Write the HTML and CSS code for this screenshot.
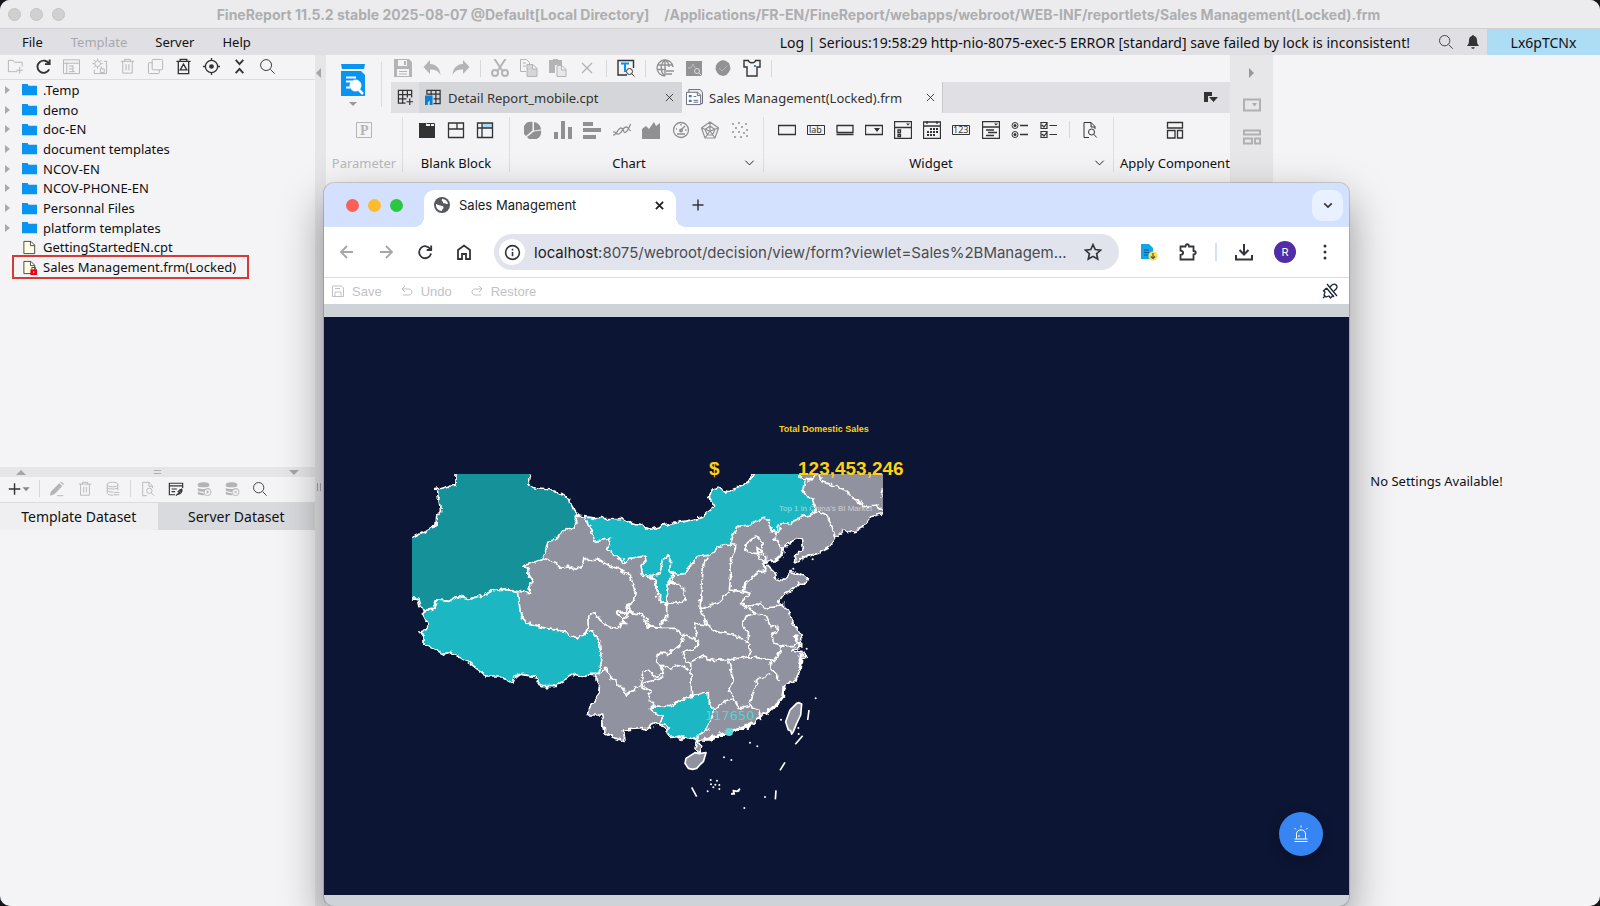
FILE: index.html
```html
<!DOCTYPE html>
<html lang="en">
<head>
  <meta charset="UTF-8">
  <meta name="viewport" content="width=device-width, initial-scale=1">
  <title>FineReport Designer</title>
  <link rel="stylesheet" href="styles.css">
</head>
<body>
  <!-- Shared icons -->
  <svg class="sprite" width="0" height="0" aria-hidden="true">
    <symbol id="i-search" viewBox="0 0 18 18"><circle cx="7.500" cy="7.500" r="5.800"/><path d="M12 12l4.500 4.500"/></symbol>
    <symbol id="i-trash" viewBox="0 0 18 18"><path d="M2 3.500h14M6 3.500v-2h6v2M4 3.500v12.500h10V3.500M7.500 6.500v6.500M10.500 6.500v6.500"/></symbol>
    <symbol id="i-folder" viewBox="0 0 16 14"><path class="solid" d="M0 1h6l1 2h9v10H0z"/><path d="M7 1.500h8.500" stroke-width="1.500"/></symbol>
    <symbol id="i-file" viewBox="0 0 16 16"><path fill="#fffde4" stroke="#444" d="M2 1.500h7.500l4 4v9H2z"/><path stroke="#444" d="M9 1.500v4.500h4.500"/></symbol>
    <symbol id="i-close" viewBox="0 0 10 10"><path d="M1 1l8 8M9 1l-8 8"/></symbol>
    <symbol id="i-chev" viewBox="0 0 12 8"><path d="M1.500 1.500L6 6l4.500-4.500"/></symbol>
    <symbol id="i-pageview" viewBox="0 0 18 18"><path d="M8 16.500H3v-15h7l4 4V8M10 1.500V6h4"/><circle cx="10.500" cy="11" r="3"/><path d="M12.700 13.200l3 3.300"/></symbol>
    <symbol id="i-db" viewBox="0 0 18 18"><path class="solid" d="M2 4c0-3.500 13-3.500 13 0v1.500c0 2-13 2-13 0zM2 8c2 1.500 11 1.500 13 0v1c-4 0-6 2-6 3-3 0-7-.5-7-2zM2 12c2 1 4 1.500 6.500 1.500 0 1 .5 2 1 2.500-4 0-7.500-.5-7.500-2z"/></symbol>
  </svg>

  <div class="app">
    <header class="titlebar">
      <div class="lights"><i></i><i></i><i></i></div>
      <div class="app-title"><span>FineReport 11.5.2 stable 2025-08-07 @Default[Local Directory]</span><span>/Applications/FR-EN/FineReport/webapps/webroot/WEB-INF/reportlets/Sales Management(Locked).frm</span></div>
    </header>

    <nav class="menubar">
      <button type="button">File</button>
      <button type="button" disabled>Template</button>
      <button type="button">Server</button>
      <button type="button">Help</button>
      <span class="log">Log | Serious:19:58:29 http-nio-8075-exec-5 ERROR [standard] save failed by lock is inconsistent!</span>
      <button type="button" class="icon" aria-label="Search"><svg><use href="#i-search"/></svg></button>
      <button type="button" class="icon bell" aria-label="Messages"><svg viewBox="0 0 18 18"><path class="solid" d="M9 1c.8 0 1 .6 1 1.200 2.500.6 3.500 2.500 3.500 5 0 3 .8 4.500 2 5.800v.5h-13V13c1.200-1.300 2-2.800 2-5.800 0-2.500 1-4.400 3.500-5C8 1.600 8.200 1 9 1zM7 15h4c-.3 1.300-1 1.700-2 1.700S7.300 16.300 7 15z"/></svg></button>
      <a href="#" class="account">Lx6pTCNx</a>
    </nav>

    <div class="workspace">
      <!-- Template tree and datasets -->
      <aside class="side">
        <div class="side-tools">
          <button type="button" class="icon" aria-label="New folder" disabled><svg viewBox="0 0 18 18"><path d="M11 14.500H1.500v-12h5l1.500 2h8V9M13.500 9.500v7M10 13h7"/></svg></button>
          <button type="button" class="icon" aria-label="Refresh"><svg viewBox="0 0 18 18" class="bold"><path d="M15 6.500A6.500 6.500 0 1 0 15 12M15.500 1.500v5H10.500"/></svg></button>
          <button type="button" class="icon" aria-label="Show in folder" disabled><svg viewBox="0 0 18 18"><path d="M.5 2h17v14.500H.5zM.5 5.500h17M4 5.500v11M6.500 8.500h4M6.500 11.500h4M6.500 14.500h6M10.500 8v6.500"/></svg></button>
          <button type="button" class="icon" aria-label="Settings" disabled><svg viewBox="0 0 18 18"><circle cx="7" cy="6" r="3"/><path d="M7 .5v2M7 9.500v2M1.500 6h2M10.500 6h2M3 2l1.500 1.500M11 2L9.500 3.500M3 10l1.500-1.500M13.500 3.500h3v13h-13v-4M10 11.500h4v4h-4zM11 9v2"/></svg></button>
          <button type="button" class="icon" aria-label="Delete" disabled><svg><use href="#i-trash"/></svg></button>
          <button type="button" class="icon" aria-label="Copy" disabled><svg viewBox="0 0 18 18"><rect x="5.500" y="1.500" width="11" height="11" rx="1"/><path d="M5.500 5h-3c-.6 0-1 .4-1 1v9.500c0 .6.400 1 1 1H12c.6 0 1-.4 1-1v-3"/></svg></button>
          <button type="button" class="icon" aria-label="Recycle bin"><svg viewBox="0 0 18 18"><path d="M1.500 3.500h15M5.500 3.500v-2h7v2M3.500 3.500v13h11v-13M9 6.500l3.500 6h-7z" stroke-width="1.400"/></svg></button>
          <button type="button" class="icon" aria-label="Locate"><svg viewBox="0 0 18 18"><circle cx="9" cy="9" r="6.500" stroke-width="1.400"/><circle class="solid" cx="9" cy="9" r="2.500"/><path d="M9 0v3M9 15v3M0 9h3M15 9h3" stroke-width="1.400"/></svg></button>
          <button type="button" class="icon" aria-label="Collapse all"><svg viewBox="0 0 18 18" class="bold"><path d="M5 2l4 4.500L13 2M5 16l4-4.500 4 4.500"/></svg></button>
          <button type="button" class="icon" aria-label="Search templates"><svg><use href="#i-search"/></svg></button>
        </div>
        <ul class="tree">
          <li class="dir"><svg><use href="#i-folder"/></svg>.Temp</li>
          <li class="dir"><svg><use href="#i-folder"/></svg>demo</li>
          <li class="dir"><svg><use href="#i-folder"/></svg>doc-EN</li>
          <li class="dir"><svg><use href="#i-folder"/></svg>document templates</li>
          <li class="dir"><svg><use href="#i-folder"/></svg>NCOV-EN</li>
          <li class="dir"><svg><use href="#i-folder"/></svg>NCOV-PHONE-EN</li>
          <li class="dir"><svg><use href="#i-folder"/></svg>Personnal Files</li>
          <li class="dir"><svg><use href="#i-folder"/></svg>platform templates</li>
          <li><svg><use href="#i-file"/></svg>GettingStartedEN.cpt</li>
          <li class="locked"><svg viewBox="0 0 16 16"><use href="#i-file"/><path fill="#e60012" stroke="none" d="M9 10h7v6H9z"/><path stroke="#e60012" d="M10.500 10V8h4v2"/><path stroke="#fff" d="M12.500 12v2"/></svg>Sales Management.frm(Locked)</li>
        </ul>
        <div class="hsplit"><i class="up"></i><b></b><i class="down"></i></div>
        <div class="data-tools">
          <button type="button" class="icon add" aria-label="Add dataset"><svg viewBox="0 0 24 18"><path d="M7 2.500v13M.5 9h13" stroke-width="1.600"/><path d="M16 7h8l-4 4.500z" fill="#888" stroke="none"/></svg></button>
          <span class="sep"></span>
          <button type="button" class="icon" aria-label="Edit" disabled><svg viewBox="0 0 18 18"><path class="solid" d="M2 12L11.500 2.500l3.500 3L6 15l-5 1.500zM12.500 1.500l1-1 3.500 3-1 1z"/><path d="M9 16.500h7"/></svg></button>
          <button type="button" class="icon" aria-label="Remove" disabled><svg><use href="#i-trash"/></svg></button>
          <button type="button" class="icon" aria-label="Dataset" disabled><svg viewBox="0 0 18 18"><ellipse cx="8.500" cy="4" rx="6" ry="2.500"/><path d="M2.500 4v9.500c0 1.500 3 2.500 7 2.500M14.500 4v6.500M2.500 7.500c1 2 11 2 12 0M2.500 10.500c1 2 6 2 7 2M10 13h6M10 15.500h6"/></svg></button>
          <span class="sep"></span>
          <button type="button" class="icon" aria-label="Preview dataset" disabled><svg><use href="#i-pageview"/></svg></button>
          <button type="button" class="icon" aria-label="Connection"><svg viewBox="0 0 18 18"><path d="M8 15.500H1.500v-13h15V8M1.500 5.500h15M4 9h6M4 12h4M9 16.500l2-2M11 12.500c2-3 4-3 4-3l1-1M15.500 9.500c1 2-1 5-4.500 5.500z" stroke-width="1.300"/></svg></button>
          <button type="button" class="icon" aria-label="Run" disabled><svg viewBox="0 0 18 18"><use href="#i-db"/><circle cx="13" cy="12.500" r="4"/><path class="solid" d="M12 10.500l3 2-3 2z"/></svg></button>
          <button type="button" class="icon" aria-label="Stop" disabled><svg viewBox="0 0 18 18"><use href="#i-db"/><circle cx="13" cy="12.500" r="4"/><path d="M11.500 11l3 3M14.500 11l-3 3"/></svg></button>
          <button type="button" class="icon" aria-label="Search datasets"><svg><use href="#i-search"/></svg></button>
        </div>
        <div class="data-tabs">
          <button type="button" class="on">Template Dataset</button>
          <button type="button">Server Dataset</button>
        </div>
      </aside>
      <div class="vsplit"><i></i><b></b></div>

      <main class="designer">
        <div class="top">
          <button type="button" class="preview" aria-label="Preview"><svg viewBox="0 0 24 42"><path fill="#0a94f2" stroke="none" d="M0 0h24l-1 5H1zM0 7h20l4 4v21H0z"/><path stroke="#fff" stroke-width="2" d="M5 13.500h10M5 17.500h6M5 23.500h4"/><circle cx="14.500" cy="21.500" r="5.500" fill="#fff" stroke="#fff"/><path stroke="#fff" stroke-width="2.500" d="M18 26l4 4"/><path fill="#999" stroke="none" d="M8 38h8l-4 4z"/></svg></button>
          <div class="top-main">
            <div class="quick">
              <button type="button" class="icon" aria-label="Save" disabled><svg viewBox="0 0 18 18"><path class="solid" fill-rule="evenodd" d="M0 0h15l3 3v15H0zM4 1v6h9V1zM3 10v7h12v-7zM10 2h2v4h-2z"/><path d="M5 12.500h8M5 15h8"/></svg></button>
              <button type="button" class="icon" aria-label="Undo" disabled><svg viewBox="0 0 18 18"><path class="solid" d="M7 1v4c6 0 10 4 10.500 11-2.500-4.500-5.500-5.500-10.500-5.500V15L.5 8z"/></svg></button>
              <button type="button" class="icon" aria-label="Redo" disabled><svg viewBox="0 0 18 18"><path class="solid" d="M11 1v4C5 5 1 9 .5 16 3 11.500 6 10.500 11 10.500V15l6.500-7z"/></svg></button>
              <span class="sep"></span>
              <button type="button" class="icon" aria-label="Cut" disabled><svg viewBox="0 0 18 18" class="bold"><path d="M3.500 0l8 12M14.500 0l-8 12"/><circle cx="4" cy="14" r="3"/><circle cx="14" cy="14" r="3"/></svg></button>
              <button type="button" class="icon" aria-label="Copy" disabled><svg viewBox="0 0 18 18"><path d="M6 12.500H.5v-12h6l3 3V5M3 4h3M3 7h3"/><path fill="#d5d5d5" d="M7 5.500h6l4 4v8H7zM12.500 5.500V10H17"/></svg></button>
              <button type="button" class="icon" aria-label="Paste" disabled><svg viewBox="0 0 18 18"><path class="solid" d="M0 1h4V0h5v1h4v5H6v8H0z"/><path fill="#e8e8e8" d="M8 6.500h5l4 4v7H8zM12.500 6.500V11H17"/></svg></button>
              <button type="button" class="icon" aria-label="Delete" disabled><svg viewBox="0 0 18 18"><path d="M4 4l10 10M14 4L4 14" stroke-width="1.400"/></svg></button>
              <span class="sep"></span>
              <button type="button" class="icon" aria-label="Find text"><svg viewBox="0 0 18 18"><path d="M10 16H1V1.500h15.500V9" stroke-width="1.400"/><path stroke="#0a94f2" stroke-width="2" d="M4 4.500h8M8 4.500V13"/><circle cx="12.500" cy="12.500" r="3"/><path d="M14.500 14.500l3 3"/></svg></button>
              <span class="sep"></span>
              <button type="button" class="icon dim" aria-label="Web preview"><svg viewBox="0 0 18 18"><path d="M17 8a8 8 0 1 0-8 9M9 1v16M1.500 6h15M1 10.500h9M9 1C4 5 4 13 9 17M9 1c3 2 4 4 4 7M10 12h8M10 15h6" stroke-width="1.400"/></svg></button>
              <button type="button" class="icon dim" aria-label="Form check"><svg viewBox="0 0 18 18"><path class="solid" d="M1 2h16v15H1z"/><path stroke="#bbb" d="M3 9h3l2-4 2 4"/><circle stroke="#ddd" cx="12" cy="12" r="2.500"/><path stroke="#ddd" d="M14 14l3 3"/></svg></button>
              <button type="button" class="icon dim" aria-label="Approve"><svg viewBox="0 0 18 18"><path class="solid" d="M9 1l3 1 3 2 1 3 .5 3-1.500 3-2.500 3L9 17l-3.500-1L3 13.500 1.500 10 2 6.500 3.500 4 6 2z"/><path stroke="#b5b5b5" d="M5 9l3 3 5-5"/></svg></button>
              <button type="button" class="icon" aria-label="Theme"><svg viewBox="0 0 18 18"><path d="M1 1.500h4.500C6 4.500 12 4.500 12.500 1.500H17V8h-3v9H4V8H1z" stroke-width="1.400"/><path stroke="#0a94f2" d="M11 7h2" stroke-width="2"/></svg></button>
              <span class="sep"></span>
            </div>
            <div class="doc-tabs">
              <button type="button" class="newtab" aria-label="New report"><svg viewBox="0 0 18 18"><path d="M9 15H1.500V1.500h14V9M1.500 6h14M1.500 10.500H10M6 1.500V15M11 1.500V9M13.500 10v7M10 13.500h7" stroke-width="1.300"/></svg></button>
              <div class="doc-tab">
                <svg viewBox="0 0 18 18"><path d="M9 15.500h7V1.500H2V6M2 5.500h14M9 10.500h7M6.500 1.500v5M11.500 1.500v14" stroke-width="1.300"/><path fill="#0a7fd0" stroke="none" d="M0 7h8v10H5v-5l-2 2v3H0z"/></svg>
                <span>Detail Report_mobile.cpt</span>
                <button type="button" aria-label="Close"><svg><use href="#i-close"/></svg></button>
              </div>
              <div class="doc-tab on">
                <svg viewBox="0 0 18 18"><path fill="#e8edf0" stroke="#667" d="M3 .5h12l2.500 3v12H3z"/><path fill="#fff" stroke="#667" d="M.5 3.500h12l3 3v10H.5zM12 3.500V7h3"/><path stroke="#3a7fc0" stroke-width="2.500" d="M3 7.500h3M3 12.500h3"/><path stroke="#667" d="M8 8h3M8 12h5M8 14h5"/></svg>
                <span>Sales Management(Locked).frm</span>
                <button type="button" aria-label="Close"><svg><use href="#i-close"/></svg></button>
              </div>
              <button type="button" class="tablist" aria-label="All tabs"><svg viewBox="0 0 14 12"><path class="solid" d="M0 0h8v4H4v6H0zM5 5h9l-4.500 5z"/></svg></button>
            </div>
          </div>
        </div>

        <!-- Component ribbon -->
        <div class="ribbon">
          <section class="param">
            <div class="tools"><svg viewBox="0 0 18 18"><path d="M1.500 1.500h15v15h-15z"/><text x="5" y="14">P</text></svg></div>
            <h2>Parameter</h2>
          </section>
          <section class="block">
            <div class="tools">
              <svg viewBox="0 0 18 18"><path class="solid" d="M1 2h7v3h9v12H1z"/><path d="M8.500 2.500h8v3M12.500 2.500v3"/></svg>
              <svg viewBox="0 0 18 18"><path d="M1.500 2h15v14.500h-15zM1.500 8h15M10 2v6" stroke-width="1.300"/></svg>
              <svg viewBox="0 0 18 18"><path fill="#a5dcf5" stroke="none" d="M6 2h10v5H6z"/><path d="M1.500 2h15v14.500h-15zM1.500 7h15M6 2v14.500M6 12" stroke-width="1.300"/></svg>
            </div>
            <h2>Blank Block</h2>
          </section>
          <section class="chart">
            <div class="tools">
              <svg viewBox="0 0 18 18"><path class="solid" d="M8.500 1v8.500L2 15A8 8 0 0 1 8.500 1zM10 1a8 8 0 0 1 7 7.500l-7 1zM10 10.500l7-1A8 8 0 0 1 3 16z"/></svg>
              <svg viewBox="0 0 18 18"><path class="solid" d="M0 11h4v7H0zM7 0h4v18H7zM14 6h4v12h-4z"/></svg>
              <svg viewBox="0 0 18 18"><path class="solid" d="M0 1h10v4H0zM0 7h18v4H0zM0 14h13v4H0z"/></svg>
              <svg viewBox="0 0 18 18"><path d="M0 14c3 1 5-7 8-7s2 6 5 4 3-6 5-8M0 11c3-1 3 3 6 2s4-7 7-7 2 3 5 4" stroke-width="1.300"/></svg>
              <svg viewBox="0 0 18 18"><path class="solid" d="M0 18V8l4-3 3 3 5-7 2 4 4-3v16z"/></svg>
              <svg viewBox="0 0 18 18"><circle cx="9" cy="9" r="7.500" stroke-width="1.300"/><path d="M9 9l4-4M5 13h8M4 8h1M9 3v1.500M13 9h1.500" stroke-width="1.500"/><circle class="solid" cx="9" cy="9.500" r="2"/></svg>
              <svg viewBox="0 0 18 18"><path d="M9 1l8.500 6-3.500 10H4L.5 7zM9 5l5 3.500-2.500 5.500h-5L4 8.500zM9 1v9M.5 7L9 10l8.500-3M4 17l5-7 5 7" stroke-width="1.200"/></svg>
              <svg viewBox="0 0 18 18" class="dots"><path d="M2 3h0M8 2h0M15 3h0M5 7h0M11 6h0M16 9h0M2 11h0M8 11h0M13 12h0M4 16h0M10 16h0M16 15h0"/></svg>
            </div>
            <h2>Chart</h2><svg class="more"><use href="#i-chev"/></svg>
          </section>
          <section class="widget">
            <div class="tools">
              <svg viewBox="0 0 18 18"><path d="M.5 4.500h17v9H.5z" stroke-width="1.300"/></svg>
              <svg viewBox="0 0 18 18"><path d="M.5 4.500h17v9H.5z"/><text x="2" y="12">lab</text></svg>
              <svg viewBox="0 0 18 18"><path d="M1 4.500h16v7H1zM.5 13.500h17" stroke-width="1.300"/></svg>
              <svg viewBox="0 0 18 18"><path d="M.5 4.500h17v9H.5z" stroke-width="1.300"/><path class="solid" d="M9 7h6l-3 4z"/></svg>
              <svg viewBox="0 0 18 18"><path d="M.5.500h17v17H.5zM.5 6.500h17M4 9h2.500v2.500H4zM4 13.500h2.500v2H4z" stroke-width="1.300"/><path class="solid" d="M12 2.500h4l-2 2z"/></svg>
              <svg viewBox="0 0 18 18"><path d="M.5 1h17v16.500H.5zM.5 5h17M4 0v3M14 0v3" stroke-width="1.300"/><path stroke-width="2" stroke-dasharray="2 1" d="M7 8h8M4 11h11M4 14h8"/></svg>
              <svg viewBox="0 0 18 18"><path d="M.5 4.500h17v9H.5z"/><text x="1" y="12">123</text></svg>
              <svg viewBox="0 0 18 18"><path d="M.5.500h17v17H.5zM.5 6h17M4 9h8M6 11.500h9M4 14.500h8" stroke-width="1.300"/><path class="solid" d="M12 2.500h4l-2 2z"/></svg>
              <svg viewBox="0 0 18 18"><circle cx="4" cy="4.500" r="3"/><circle cx="4" cy="13.500" r="3"/><circle class="solid" cx="4" cy="4.500" r="1.500"/><circle class="solid" cx="4" cy="13.500" r="1.500"/><path d="M9 4.500h8M9 13.500h8" stroke-width="1.300"/></svg>
              <svg viewBox="0 0 18 18"><path d="M1 1.500h6v6H1zM1 10.500h6v6H1zM2 4l2 2 3-4M2 13l2 2 3-4M9.500 4.500h7.500M9.500 13.500h7.500" stroke-width="1.200"/></svg>
              <span class="sep"></span>
              <svg><use href="#i-pageview"/></svg>
            </div>
            <h2>Widget</h2><svg class="more"><use href="#i-chev"/></svg>
          </section>
          <section class="apply">
            <div class="tools"><svg viewBox="0 0 18 18"><path d="M1.500 1.500h15v5.500h-15zM1.500 9.500h7.500v7.500H1.500zM11.500 9.500h5v7.500h-5z" stroke-width="1.300"/></svg></div>
            <h2>Apply Component</h2>
          </section>
        </div>
      </main>

      <aside class="rail">
        <svg viewBox="0 0 18 18"><path fill="#999" stroke="none" d="M6 4l5 5-5 5z"/></svg>
        <svg viewBox="0 0 18 18"><path d="M1 3.500h16v11H1z" stroke-width="2"/><path fill="#aaa" stroke="none" d="M9 7h5l-2.500 3.500z"/></svg>
        <svg viewBox="0 0 18 18"><path d="M1 2.500h16v4H1zM1 10.500h8v5H1zM12 10.500h5v5h-5z" stroke-width="2"/></svg>
      </aside>
      <aside class="settings">No Settings Available!</aside>
    </div>

    <!-- Browser window floating over the designer -->
    <div class="browser">
      <div class="tabstrip">
        <div class="lights on"><i></i><i></i><i></i></div>
        <div class="page-tab">
          <svg viewBox="0 0 16 16"><circle cx="8" cy="8" r="8" fill="#55585d" stroke="none"/><path fill="#fff" stroke="none" d="M8 2c3-.5 5.500 2 6 4.500-1 1-2 .5-2.500 0S9 7 9 5.500 7 4 8 2zM2 7l4 1.500c2 .5 3.500 0 3.500 2S8 11.500 8 14C4.500 14 1.500 11 2 7z"/></svg>
          <span>Sales Management</span>
          <button type="button" aria-label="Close tab"><svg><use href="#i-close"/></svg></button>
        </div>
        <button type="button" class="plus" aria-label="New tab"><svg viewBox="0 0 12 12"><path d="M6 .5v11M.5 6h11"/></svg></button>
        <button type="button" class="tabsearch" aria-label="Search tabs"><svg><use href="#i-chev"/></svg></button>
      </div>
      <div class="addressbar">
        <button type="button" class="off" aria-label="Back"><svg viewBox="0 0 18 18"><path d="M15 9H3M9 3L3 9l6 6"/></svg></button>
        <button type="button" class="off" aria-label="Forward"><svg viewBox="0 0 18 18"><path d="M3 9h12M9 3l6 6-6 6"/></svg></button>
        <button type="button" aria-label="Reload"><svg viewBox="0 0 18 18"><path d="M14.500 6.500A6 6 0 1 0 15 10.500M15.200 2.500v4.500H10.700"/></svg></button>
        <button type="button" aria-label="Home"><svg viewBox="0 0 18 18"><path d="M3 16V7l6-4.500L15 7v9h-4v-5H7v5z"/></svg></button>
        <div class="omnibox">
          <span class="info"><svg viewBox="0 0 16 16"><circle cx="8" cy="8" r="6.500"/><path d="M8 7.500v4M8 4.500v1.500"/></svg></span>
          <div class="url"><b>localhost</b>:8075/webroot/decision/view/form?viewlet=Sales%2BManagem...</div>
          <svg viewBox="0 0 16 16"><path d="M8 1.500l2 4.300 4.700.5-3.500 3.200 1 4.800L8 11.900l-4.200 2.400 1-4.800L1.300 6.300 6 5.800z"/></svg>
        </div>
        <button type="button" aria-label="File downloader"><svg viewBox="0 0 16 18"><path fill="#12a5e8" stroke="none" d="M0 1h8l4 4v11H0z"/><path stroke="#075a94" stroke-width="1" d="M3 7h5M3 9.500h5M3 12h4"/><circle cx="12" cy="13" r="4.500" fill="#f7e04a" stroke="none"/><path stroke="#555" stroke-width="1.200" d="M12 10v5.500M9.800 13.500l2.200 2 2.200-2"/></svg></button>
        <button type="button" aria-label="Extensions"><svg viewBox="0 0 18 18" class="bold"><path d="M1.500 3.500h5c.3-3 3.200-3 3.500 0h4.500v4.500c3 .3 3 3.200 0 3.500v5h-13V12c3.500-.3 3.500-4 0-4.300z"/></svg></button>
        <span class="bar"></span>
        <button type="button" aria-label="Downloads"><svg viewBox="0 0 18 18"><path d="M9 1v10M4.500 7L9 11.500 13.500 7M1 12v4.500h16V12" stroke-width="2"/></svg></button>
        <button type="button" class="avatar">R</button>
        <button type="button" aria-label="Menu"><svg viewBox="0 0 18 18" class="kebab"><path d="M9 3h0M9 9h0M9 15h0"/></svg></button>
      </div>
      <div class="editbar">
        <button type="button"><svg viewBox="0 0 12 12"><path d="M.5 1h9l2 2v8.500H.5zM3 11V7h6v4M3 3.500h5"/></svg>Save</button>
        <button type="button"><svg viewBox="0 0 12 12"><path d="M4 1L1 4l3 3M1 4h7c4 0 4 6 0 6H2"/></svg>Undo</button>
        <button type="button"><svg viewBox="0 0 12 12"><path d="M8 1l3 3-3 3M11 4H4c-4 0-4 6 0 6h6"/></svg>Restore</button>
        <button type="button" class="unplug" aria-label="Disconnect"><svg viewBox="0 0 16 16"><path d="M5 1l10 12M8 4l2.500-2.500c3-1.500 5.500 1.500 4 4L12 8M4.500 5L1.500 8l1.500 1-1 3 2 2 3-1 1.500 2 3-3M4.500 5l7.500 9M1 15l2.500-2.500"/></svg></button>
      </div>
      <div class="dashboard">
        <div class="map">
          <svg viewBox="36 0 1449 1080">
            <defs>
              <clipPath id="frame"><path d="M36 42H1449V1080H36z"/></clipPath>
              <filter id="coast" x="0" y="0" width="100%" height="100%" color-interpolation-filters="sRGB">
                <feTurbulence type="fractalNoise" baseFrequency="0.06" numOctaves="2" seed="4"/>
                <feDisplacementMap in="SourceGraphic" scale="18" xChannelSelector="R" yChannelSelector="G"/>
              </filter>
            </defs>
            <g clip-path="url(#frame)"><g filter="url(#coast)">
              <path class="land" d="M533 168L555 172L600 200L700 240L900 220L1060 90L1120 20H1460V160L1430 165L1415 170L1390 200L1370 205L1368 218L1330 210L1305 235L1285 265L1255 280L1215 290L1195 305L1183 305L1188 285L1210 265L1208 240L1190 236L1165 250L1150 265L1145 290L1125 303L1105 303L1092 310L1110 328L1125 335L1130 355L1145 362L1165 345L1170 335L1185 338L1225 355L1222 370L1195 370L1170 395L1150 405L1135 425L1165 450L1180 490L1205 530L1205 560L1178 570L1205 575L1220 585L1205 600L1200 630L1185 665L1160 670L1150 700L1130 735L1090 765L1050 800L1000 810L970 825L930 840L900 840L888 838L905 862L900 878L885 865L890 840L870 828L845 838L800 815L775 785L740 805L670 810L675 845L660 840L615 820L610 790L605 765L565 765L570 740L595 710L598 680L585 660L590 600L560 540L500 535L380 505L340 400L360 310L420 285L435 240L475 210L515 195z"/>
              <path class="dark" d="M168 20V75L150 78L102 90L113 98L122 153L110 168L108 195L75 213L20 242V415L54 418L60 440L78 451L98 448L110 420L150 424L172 410L205 418L230 412L255 405L275 393L320 386L352 394L390 398L386 378L399 366L384 345L383 325L371 318L410 304L430 297L443 245L465 240L480 220L505 206L525 203L533 168L515 140L510 118L460 90L415 87L386 78L392 42V20z"/>
              <path class="teal" d="M78 451L70 465L85 495L78 512L62 516L72 530V553L108 570L135 584L155 578L210 610L260 648L300 648L338 668L345 650L365 643L405 650L412 662L424 680H465L505 652L520 642L550 650L575 640H597L605 600L598 548L575 512L560 510L557 520L530 537L500 515L440 506L380 488L362 465L352 394L320 386L275 393L255 405L205 418L172 410L150 424L110 420L98 448z"/>
              <path class="teal" d="M555 170L590 176H665L690 190L725 197L750 208L780 200L820 190L900 175L945 140L928 112L935 90L955 85L985 95L1020 78L1045 68L1060 42V20H1200V55L1215 60L1208 90L1220 110L1240 115L1248 150L1230 165L1205 170L1170 190L1143 188L1135 220L1115 215L1108 190L1098 175L1075 178L1050 195L1010 200L1000 225L990 255L950 262L930 285L895 290L870 315L858 340L835 343L820 338L780 340L752 350L725 345L720 320L738 300L735 288L690 295L675 310L650 290L620 268L632 235L585 245L572 210z"/>
              <path class="teal" d="M780 340L788 295L805 287L812 300L810 330L820 340V360L800 370L805 395L798 425L780 428L782 405L768 395V365L752 350z"/>
              <path class="teal" d="M750 745L765 738L810 740L840 720L875 710L910 700L925 698V730L940 745L938 765L920 805L890 832L870 838L840 828L815 832L802 820L805 798L780 790L790 770L760 755z"/>
              <!-- North-west borders -->
              <path class="line" d="M430 297L465 307L480 322L505 318L527 328L545 320L552 295L570 302L600 300L630 318L650 325L690 345L706 395L700 425L683 435L680 455L650 460L680 490L662 490L650 508L625 500L600 480L585 458L563 470L565 500L557 520M680 455L715 458L740 475L750 500L778 505M752 350L768 365L775 400L768 415"/>
              <!-- North-east borders -->
              <g transform="translate(720 -150)"><path class="line" d="M480 205L510 210L520 195L540 192L545 215L570 222L615 240L640 265L655 275L670 290L710 285L735 305M727 235L723 260M670 290L665 270M510 315L540 305L560 315L575 350L588 385M415 340L405 385L430 415M430 415L420 440L395 455M270 395L290 410L280 440L268 460L272 500L268 540L310 545L315 520L360 485L378 480L372 460M315 410L325 390L350 380L370 400L365 430L340 430L315 420zM350 412L375 430L378 455L360 450zM205 435L190 470L185 530L180 595L240 575L265 545M310 545L330 550L300 580L330 590L360 580L375 595L410 590L430 580M100 490L85 515L110 520L130 535L135 570L110 580L80 575M80 575V620L65 645"/></g>
              <!-- Central and southern borders -->
              <g transform="translate(540 420)"><path class="line" d="M145 42L150 30L145 10M110 35L145 42L130 55L120 85M150 40L180 40L205 80L240 85L280 85L310 105L300 135L270 160L235 160L230 185L240 195L250 220L225 230L205 210L190 215L180 255L160 270L140 285L120 255L95 235L75 205L60 225M240 195L270 205L300 195L330 210M310 105L345 115L355 130L340 150L310 155L320 185L332 190L335 290M250 230L190 250L185 260L210 275L205 300L225 325M332 185L370 168L400 182L445 178L450 200L460 240L450 270L462 300L435 305L410 320L400 330M240 85L243 65L262 60M345 110L350 90L345 70L380 75L360 20M380 75L410 95L460 105L505 125L510 170L445 180M505 125V95L485 75L495 50L525 40L515 30L480 15M525 35L555 45L570 80L590 75L592 95L575 100L580 125L605 140H640L660 125M605 140L600 150L585 182L510 170M585 182L570 190L575 210L605 245M572 220L530 240L520 280L510 315L475 325L462 300M510 315L535 330L545 360"/>
              <path class="shore" d="M645 110L660 140M665 160L655 210M612 258L608 290L590 315L550 345M520 370L475 385L440 398L400 412L370 418"/></g>
            </g></g>
            <g transform="translate(540 420)">
              <path class="land" d="M318 475L332 466L345 458L358 461L378 458L370 485L362 492L350 505L338 508L325 505L315 490zM650 310L657 308L665 312L662 345L650 370L640 395L635 402L632 392L625 390L617 365L630 330L638 322z"/>
              <path class="line" d="M687 330L683 360M668 407L646 433M615 487L600 511M588 571L586 598M335 562L350 590M455 580L463 582L460 572L472 574L480 566"/>
              <path class="isle" d="M707 295h0M603 359h0M655 384h0M656 402h0M510 428h0M532 439h0M432 472h0M454 480h0M392 540h0M411 542h0M418 555h0M418 567h0M393 553h0M400 562h0M406 554h0M383 574h0M456 582h0M476 572h0M555 591h0M493 624h0M680 146h0"/>
              <circle class="spot" cx="447" cy="396" r="12"/>
            </g>
            <g transform="translate(720 -150)"><path class="isle" d="M500 440h0M518 448h0M508 434h0M480 446h0M488 440h0M460 476h0M453 482h0"/></g>
          </svg>
        </div>
        <strong class="kpi-title">Total Domestic Sales</strong>
        <strong class="kpi-unit">$</strong>
        <strong class="kpi-value">123,453,246</strong>
        <span class="kpi-note">Top 1 in China's BI Market</span>
        <span class="city-value">117650</span>
        <button type="button" class="alarm" aria-label="Alerts"><svg viewBox="0 0 16 18"><path d="M3.500 13.500V9c0-5.500 9-5.500 9 0v4.500M6 12v-2M1.500 14h13M1.500 16.500h13M8 .5v2M1.500 3l1.500 1.500M14.500 3L13 4.500"/></svg></button>
      </div>
    </div>
  </div>
</body>
</html>
```
FILE: styles.css
```css
* {
  box-sizing: border-box;
}

body {
  margin: 0;
  background: #14161c;
  font-family: "Noto Sans", "Open Sans", sans-serif;
  font-size: 13px;
  color: #111;
  overflow: hidden;
}

button {
  display: flex;
  align-items: center;
  justify-content: center;
  margin: 0;
  padding: 0;
  border: 0;
  background: none;
  font: inherit;
  color: inherit;
}

svg {
  display: block;
  flex: none;
  fill: none;
  stroke: currentColor;
}

.solid {
  fill: currentColor;
  stroke: none;
}

.bold {
  stroke-width: 2;
}

.sprite {
  position: absolute;
}

.app {
  position: relative;
  display: flex;
  flex-direction: column;
  height: 100vh;
  background: #f4f4f6;
  border-radius: 10px;
  overflow: hidden;
}

/* Title bar */
.titlebar {
  display: flex;
  align-items: center;
  height: 29px;
  background: #ececee;
  border-bottom: 1px solid #d0d0d3;
}

.lights {
  display: flex;
  gap: 9px;
  padding-left: 8px;
}

.lights i {
  width: 13px;
  height: 13px;
  border-radius: 50%;
  background: #d0d0d1;
  border: 1px solid #c2c2c3;
}

.app-title {
  display: flex;
  flex: 1;
  justify-content: center;
  gap: 15px;
  padding-right: 68px;
  font-family: Inter, "Liberation Sans", sans-serif;
  font-size: 14px;
  font-weight: 700;
  color: #aeaeb0;
  white-space: nowrap;
}

/* Menu bar */
.menubar {
  display: flex;
  align-items: center;
  height: 26px;
  padding-left: 22px;
  gap: 28px;
  background: #dfdfe4;
}

.menubar button:disabled {
  color: #a9a9ad;
}

.log {
  margin-left: auto;
  font-size: 14px;
  white-space: nowrap;
}

.icon,
.icon svg {
  width: 18px;
  height: 18px;
}

.menubar .icon {
  margin-right: -17px;
  width: 16px;
}

.menubar .icon svg {
  width: 16px;
  height: 16px;
  color: #333;
}

.menubar .icon.bell {
  margin-right: -22px;
}

.account {
  display: flex;
  align-items: center;
  justify-content: center;
  width: 113px;
  height: 26px;
  background: #addcf5;
  color: #111;
  font-size: 14px;
  text-decoration: none;
}

.workspace {
  display: flex;
  flex: 1;
  min-height: 0;
}

/* Left pane */
.side {
  display: flex;
  flex-direction: column;
  width: 315px;
}

.icon {
  color: #333;
}

.icon:disabled {
  color: #b4b4b6;
}

.icon.dim {
  color: #929294;
}

.side-tools {
  display: flex;
  align-items: center;
  gap: 10px;
  height: 25px;
  padding: 0 6px 2px;
  border-bottom: 1px solid #dcdcde;
}

.side-tools .icon svg {
  width: 17px;
  height: 17px;
}

.tree {
  display: grid;
  grid-auto-rows: 1fr;
  height: 197px;
  margin: 0 0 190px;
  padding: 0 14px;
  list-style: none;
}

.tree li {
  position: relative;
  display: flex;
  align-items: center;
  justify-self: start;
  gap: 6px;
  padding: 0 11px 0 8px;
  white-space: nowrap;
}

.tree svg {
  width: 15px;
  height: 15px;
  color: #0a94f2;
}

.tree use {
  stroke: #f4f4f6;
}

.dir::before {
  content: "";
  position: absolute;
  left: -9px;
  border: 4px solid transparent;
  border-left: 5px solid #aaa;
  border-right: 0;
}

.locked {
  outline: 2px solid #d63a35;
}

.hsplit {
  display: flex;
  align-items: center;
  justify-content: space-between;
  height: 10px;
  padding: 0 16px;
  background: #e6e6e8;
}

.hsplit i {
  border: 5px solid transparent;
}

.hsplit .up {
  border-top: 0;
  border-bottom-color: #a5a5a8;
}

.hsplit .down {
  border-bottom: 0;
  border-top-color: #a5a5a8;
}

.hsplit b {
  width: 7px;
  height: 4px;
  border: solid #b0b0b3;
  border-width: 1px 0;
}

.data-tools {
  display: flex;
  align-items: center;
  gap: 10px;
  height: 25px;
  padding: 0 7px 2px;
}

.data-tools .icon svg {
  width: 16px;
  height: 16px;
}

.data-tools .icon.add,
.data-tools .icon.add svg {
  width: 24px;
}

.sep {
  width: 1px;
  height: 17px;
  background: #d8d8da;
}

.data-tools .sep {
  margin: 0 -2px;
}

.data-tabs {
  display: flex;
  height: 28px;
  border-top: 1px solid #dcdcde;
  font-size: 14px;
}

.data-tabs button {
  flex: 1;
  background: #d9dadd;
}

.data-tabs .on {
  background: #efeff1;
}

.vsplit {
  position: relative;
  width: 11px;
  background: #e6e6e8;
}

.vsplit i {
  position: absolute;
  top: 13px;
  left: 1px;
  border: 5px solid transparent;
  border-left: 0;
  border-right-color: #a5a5a8;
}

.vsplit b {
  position: absolute;
  top: 428px;
  left: 2px;
  width: 4px;
  height: 8px;
  border: solid #a5a5a8;
  border-width: 0 1px;
}

/* Designer */
.designer {
  flex: 1;
  min-width: 0;
}

.top {
  display: flex;
}

.preview {
  width: 56px;
  height: 45px;
  margin-top: 7px;
  padding-right: 16px;
  border-right: 1px solid #dcdcde;
  justify-content: flex-end;
}

.preview svg {
  width: 24px;
  height: 42px;
}

.top-main {
  flex: 1;
  margin-left: 9px;
  min-width: 0;
}

.quick {
  display: flex;
  align-items: center;
  gap: 11px;
  height: 27px;
  padding: 0 3px 1px;
}

.quick .sep {
  margin: 0 -1px;
}

.doc-tabs {
  display: flex;
  height: 31px;
  background: #dfdfe4;
  color: #333;
}

.newtab {
  width: 28px;
}

.doc-tabs svg {
  width: 17px;
  height: 17px;
}

.doc-tab {
  display: flex;
  align-items: center;
  gap: 6px;
  width: 263px;
  padding: 0 8px 0 6px;
  background: #d5d6da;
  white-space: nowrap;
}

.doc-tab.on {
  width: 261px;
  padding: 0 7px 0 4px;
  background: #f4f4f6;
  border-right: 1px solid #c8c8cc;
}

.doc-tab button {
  margin-left: auto;
}

.doc-tab button svg {
  width: 9px;
  height: 9px;
}

.doc-tabs .tablist {
  margin: 0 12px 0 auto;
}

.tablist svg {
  width: 14px;
  height: 12px;
}

.ribbon {
  display: flex;
  height: 67px;
  padding-top: 4px;
}

.ribbon section {
  position: relative;
  height: 55px;
  padding-top: 4px;
  border-right: 1px solid #dedee0;
}

.tools {
  display: flex;
  justify-content: center;
  gap: 11px;
  height: 19px;
}

.tools svg {
  width: 18px;
  height: 18px;
  color: #333;
}

.ribbon h2 {
  margin: 14px 0 0;
  font-size: 13px;
  font-weight: 400;
  line-height: 18px;
  text-align: center;
  white-space: nowrap;
}

.ribbon text {
  fill: currentColor;
  stroke: none;
  font-size: 9px;
}

.param {
  width: 77px;
  color: #b9b9bb;
}

.param .tools svg {
  color: #b4b4b6;
}

.ribbon .param text {
  font-family: "Liberation Serif", serif;
  font-weight: 700;
  font-size: 14px;
}

.block {
  width: 107px;
}

.chart {
  width: 254px;
}

.chart .tools,
.widget .tools {
  justify-content: space-between;
  gap: 0;
  padding: 0 14px;
}

.chart h2,
.widget h2 {
  padding-right: 15px;
}

.chart .tools svg {
  color: #909092;
}

.dots {
  stroke-width: 2;
  stroke-linecap: round;
}

.widget {
  width: 350px;
}

.ribbon .more {
  position: absolute;
  right: 8px;
  bottom: 5px;
  width: 11px;
  height: 8px;
}

.ribbon .apply {
  flex: 1;
  min-width: 0;
  padding-left: 6px;
  border: 0;
  overflow: hidden;
}

.apply h2 {
  text-align: left;
}

/* Right pane */
.rail {
  display: flex;
  flex-direction: column;
  align-items: center;
  gap: 14px;
  width: 43px;
  padding-top: 9px;
  background: #e7e7e9;
  color: #b0b0b2;
}

.rail svg {
  width: 18px;
  height: 18px;
}

.settings {
  display: flex;
  align-items: center;
  justify-content: center;
  width: 327px;
}

/* Browser window */
.browser {
  position: absolute;
  top: 183px;
  left: 324px;
  right: 251px;
  bottom: 0;
  display: flex;
  flex-direction: column;
  background: #ced3d7;
  border-radius: 10px;
  box-shadow: 0 0 0 1px rgba(0, 0, 0, 0.15), 0 18px 44px rgba(0, 0, 0, 0.4);
  font-family: Inter, Roboto, sans-serif;
  color: #33353a;
  overflow: hidden;
}

.tabstrip {
  display: flex;
  align-items: center;
  height: 44px;
  background: #d3e1fe;
}

.lights.on {
  padding-left: 22px;
}

.lights.on i {
  background: #fe5f57;
  border: 0;
}

.lights.on i:nth-child(2) {
  background: #febb2e;
}

.lights.on i:nth-child(3) {
  background: #28c840;
}

.page-tab {
  position: relative;
  display: flex;
  align-items: center;
  gap: 9px;
  align-self: flex-end;
  width: 252px;
  height: 37px;
  margin-left: 21px;
  padding: 0 12px 7px 10px;
  background: #fff;
  border-radius: 10px 10px 0 0;
  color: #202124;
}

.page-tab::before,
.page-tab::after {
  content: "";
  position: absolute;
  bottom: 0;
  left: -10px;
  width: 10px;
  height: 10px;
  background: radial-gradient(circle at 0 0, #d3e1fe 10px, #fff 10px);
}

.page-tab::after {
  left: auto;
  right: -10px;
  background: radial-gradient(circle at 100% 0, #d3e1fe 10px, #fff 10px);
}

.page-tab svg {
  width: 16px;
  height: 16px;
}

.page-tab button {
  margin-left: auto;
}

.page-tab button svg {
  width: 9px;
  height: 9px;
  stroke-width: 2;
}

.plus {
  margin-left: 16px;
}

.plus svg {
  width: 12px;
  height: 12px;
  stroke-width: 1.5;
}

.tabsearch {
  width: 31px;
  height: 31px;
  margin: 0 6px 0 auto;
  border-radius: 10px;
  background: #e9f1ff;
}

.tabsearch svg {
  width: 10px;
  height: 7px;
  stroke-width: 2;
}

.addressbar {
  display: flex;
  align-items: center;
  gap: 21px;
  height: 51px;
  padding: 0 15px 0 14px;
  background: #fff;
  border-bottom: 1px solid #dcdde0;
}

.addressbar svg {
  width: 18px;
  height: 18px;
}

.addressbar > button svg {
  stroke-width: 1.8;
}

.addressbar .off {
  color: #a4a6a9;
}

.omnibox {
  display: flex;
  align-items: center;
  flex: 1;
  min-width: 0;
  height: 36px;
  padding: 0 17px 0 5px;
  border-radius: 18px;
  background: #e2e4ed;
  font-size: 15px;
}

.info {
  display: flex;
  align-items: center;
  justify-content: center;
  width: 26px;
  height: 26px;
  border-radius: 50%;
  background: #fff;
}

.omnibox svg {
  stroke-width: 1.5;
}

.info svg {
  width: 17px;
  height: 17px;
}

.url {
  flex: 1;
  padding-left: 9px;
  color: #4a4c50;
  white-space: nowrap;
}

.url b {
  font-weight: 400;
  color: #202124;
}

.bar {
  width: 2px;
  height: 18px;
  margin: 0 -3px;
  background: #d3e1fe;
}

.avatar {
  width: 22px;
  height: 22px;
  margin-right: -1px;
  border-radius: 50%;
  background: #512da8;
  color: #fff;
  font-size: 11px;
}

.addressbar > button .kebab {
  stroke-width: 3;
  stroke-linecap: round;
}

.editbar {
  display: flex;
  align-items: center;
  gap: 19px;
  height: 26px;
  padding: 0 11px 0 8px;
  background: #fff;
  font-family: "Liberation Sans", Arial, sans-serif;
  color: #bfc1c6;
}

.editbar button {
  gap: 8px;
}

.editbar svg {
  width: 12px;
  height: 12px;
}

.editbar .unplug {
  margin-left: auto;
  color: #1c2540;
}

.unplug svg {
  width: 16px;
  height: 16px;
  stroke-width: 1.3;
}

/* Dashboard canvas */
.dashboard {
  position: relative;
  flex: 1;
  margin: 13px 0 11px;
  background: #0c1533;
  font-family: "Liberation Sans", Arial, sans-serif;
}

.dashboard > * {
  position: absolute;
}

.map {
  left: 88px;
  top: 143px;
}

.map svg {
  width: 483px;
  height: 360px;
}

.map path {
  stroke: #fff;
  stroke-width: 5;
  stroke-linejoin: round;
}

.land {
  fill: #9192a0;
}

.dark {
  fill: #159199;
}

.teal {
  fill: #1bb7c2;
}

.map .shore {
  stroke-width: 9;
}

.map .isle {
  stroke-width: 6;
  stroke-linecap: round;
}

.spot {
  fill: #5fd8d8;
  stroke: none;
}

.kpi-title {
  left: 455px;
  top: 107px;
  font-size: 9px;
  color: #fcd116;
}

.kpi-unit,
.kpi-value {
  left: 385px;
  top: 141px;
  font-size: 19px;
  line-height: 22px;
  color: #fcd116;
}

.kpi-value {
  left: 474px;
}

.kpi-note {
  left: 455px;
  top: 187px;
  font-size: 8px;
  color: rgba(255, 255, 255, 0.55);
}

.city-value {
  left: 381px;
  top: 391px;
  font-family: "DejaVu Sans", sans-serif;
  font-size: 13px;
  color: #52d3d6;
}

.alarm {
  right: 26px;
  bottom: 39px;
  width: 44px;
  height: 44px;
  border-radius: 50%;
  background: #3685f2;
  color: #fff;
  box-shadow: 0 4px 12px rgba(0, 0, 0, 0.3);
}

.alarm svg {
  width: 16px;
  height: 18px;
}
```
